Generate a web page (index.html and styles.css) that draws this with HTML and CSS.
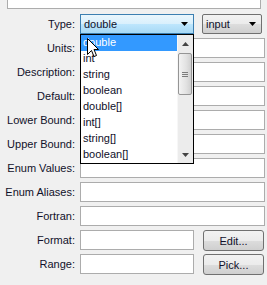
FILE: index.html
```
<!DOCTYPE html>
<html lang="en">
<head>
  <meta charset="UTF-8" />
  <title>Variable Properties</title>
  <link rel="stylesheet" href="styles.css">
</head>
<body>

<div class="panel">

  <div class="topbox"></div>

  <div class="form">
    <label>Type:</label>
    <div class="pair">
      <div class="combo hot">double<span class="arrow"><svg width="7" height="4" viewBox="0 0 7 4"><path d="M0 0H7L3.5 4Z" fill="#000"/></svg></span></div>
      <div class="combo plain">input<span class="arrow"><svg width="7" height="4" viewBox="0 0 7 4"><path d="M0 0H7L3.5 4Z" fill="#000"/></svg></span></div>
    </div>

    <label>Units:</label>
    <div class="field"></div>

    <label>Description:</label>
    <div class="field"></div>

    <label>Default:</label>
    <div class="field"></div>

    <label>Lower Bound:</label>
    <div class="field"></div>

    <label>Upper Bound:</label>
    <div class="field"></div>

    <label>Enum Values:</label>
    <div class="field"></div>

    <label>Enum Aliases:</label>
    <div class="field"></div>

    <label>Fortran:</label>
    <div class="field"></div>

    <label>Format:</label>
    <div class="pair wide">
      <div class="field short"></div>
      <button class="btn">Edit...</button>
    </div>

    <label>Range:</label>
    <div class="pair wide">
      <div class="field short"></div>
      <button class="btn">Pick...</button>
    </div>
  </div>

  <!-- open type list -->
  <div class="dropdown">
    <ul class="items">
      <li class="selected">double</li>
      <li>int</li>
      <li>string</li>
      <li>boolean</li>
      <li>double[]</li>
      <li>int[]</li>
      <li>string[]</li>
      <li>boolean[]</li>
    </ul>
    <div class="scrollbar">
      <div class="sb-btn"><svg width="7" height="4" viewBox="0 0 7 4"><path d="M0 4H7L3.5 0Z" fill="#444"/></svg></div>
      <div class="thumb"><span></span><span></span><span></span></div>
      <div class="sb-track"></div>
      <div class="sb-btn"><svg width="7" height="4" viewBox="0 0 7 4"><path d="M0 0H7L3.5 4Z" fill="#444"/></svg></div>
    </div>
  </div>

  <svg class="pointer" width="12" height="20" viewBox="0 0 12 20">
    <path d="M0.5 0.5V16.5L4.5 12.5L7 18.5L9.5 17.5L7 11.5H11.5Z" fill="#fff" stroke="#000" stroke-width="1" stroke-linejoin="round"/>
  </svg>

</div>

</body>
</html>
```

FILE: styles.css
```
body {
  margin: 0;
  background: #f0f0f0;
  font-family: "Liberation Sans", Arial, sans-serif;
  font-size: 11px;
  color: #10102a;
}

.panel {
  position: relative;
  width: 267px;
  height: 285px;
  overflow: hidden;
}

.topbox {
  box-sizing: border-box;
  margin-left: 7px;
  width: 254px;
  height: 9px;
  background: #fff;
  border: 1px solid #acacac;
  border-top: none;
}

.form {
  display: grid;
  grid-template-columns: 75px 185px;
  grid-auto-rows: 20px;
  column-gap: 5px;
  row-gap: 4px;
  margin-top: 5px;
}

.form label {
  text-align: right;
  line-height: 20px;
  white-space: nowrap;
}

.field {
  box-sizing: border-box;
  height: 20px;
  background: #fff;
  border: 1px solid #acacac;
}

.field.short {
  width: 114px;
}

.pair {
  display: flex;
  gap: 8px;
  align-items: flex-start;
}

.pair.wide {
  gap: 9px;
}

.combo {
  box-sizing: border-box;
  position: relative;
  height: 20px;
  line-height: 18px;
  padding-left: 3px;
  border: 1px solid #707070;
}

.combo.hot {
  width: 114px;
  border-color: #3c7fb1;
  background: linear-gradient(#eaf6fd, #d9f0fc 50%, #bee6fd 50%, #a7d9f5);
}

.combo.plain {
  width: 60px;
  border-radius: 2px;
  background: linear-gradient(#f2f2f2, #ebebeb 50%, #dddddd 50%, #cfcfcf);
}

.combo .arrow {
  position: absolute;
  right: 5px;
  top: 7px;
  line-height: 0;
}

.btn {
  box-sizing: border-box;
  width: 61px;
  height: 21px;
  padding: 0;
  font: inherit;
  color: inherit;
  border: 1px solid #707070;
  border-radius: 3px;
  background: linear-gradient(#f2f2f2, #ebebeb 50%, #dddddd 50%, #cfcfcf);
}

.dropdown {
  position: absolute;
  left: 80px;
  top: 34px;
  box-sizing: border-box;
  width: 114px;
  height: 130px;
  border: 1px solid #000;
  background: #fff;
  display: flex;
}

.items {
  list-style: none;
  margin: 0;
  padding: 0;
  width: 96px;
}

.items li {
  height: 16px;
  line-height: 15px;
  padding-left: 2px;
}

.items li.selected {
  background: #3399ff;
  color: #fff;
}

.scrollbar {
  width: 16px;
  display: flex;
  flex-direction: column;
  background: #ececec;
  border-left: 1px solid #f7f7f7;
  box-sizing: border-box;
}

.sb-btn {
  height: 17px;
  display: flex;
  align-items: center;
  justify-content: center;
}

.thumb {
  box-sizing: border-box;
  height: 42px;
  margin: 1px 1px 0 0;
  border: 1px solid #959595;
  border-radius: 2px;
  background: linear-gradient(90deg, #f3f3f3, #e2e2e2 60%, #d0d0d0);
  display: flex;
  flex-direction: column;
  justify-content: center;
  align-items: center;
  gap: 1px;
}

.thumb span {
  width: 6px;
  height: 1px;
  background: #7c7c7c;
}

.sb-track {
  flex: 1;
}

.pointer {
  position: absolute;
  left: 87px;
  top: 38px;
}
```
